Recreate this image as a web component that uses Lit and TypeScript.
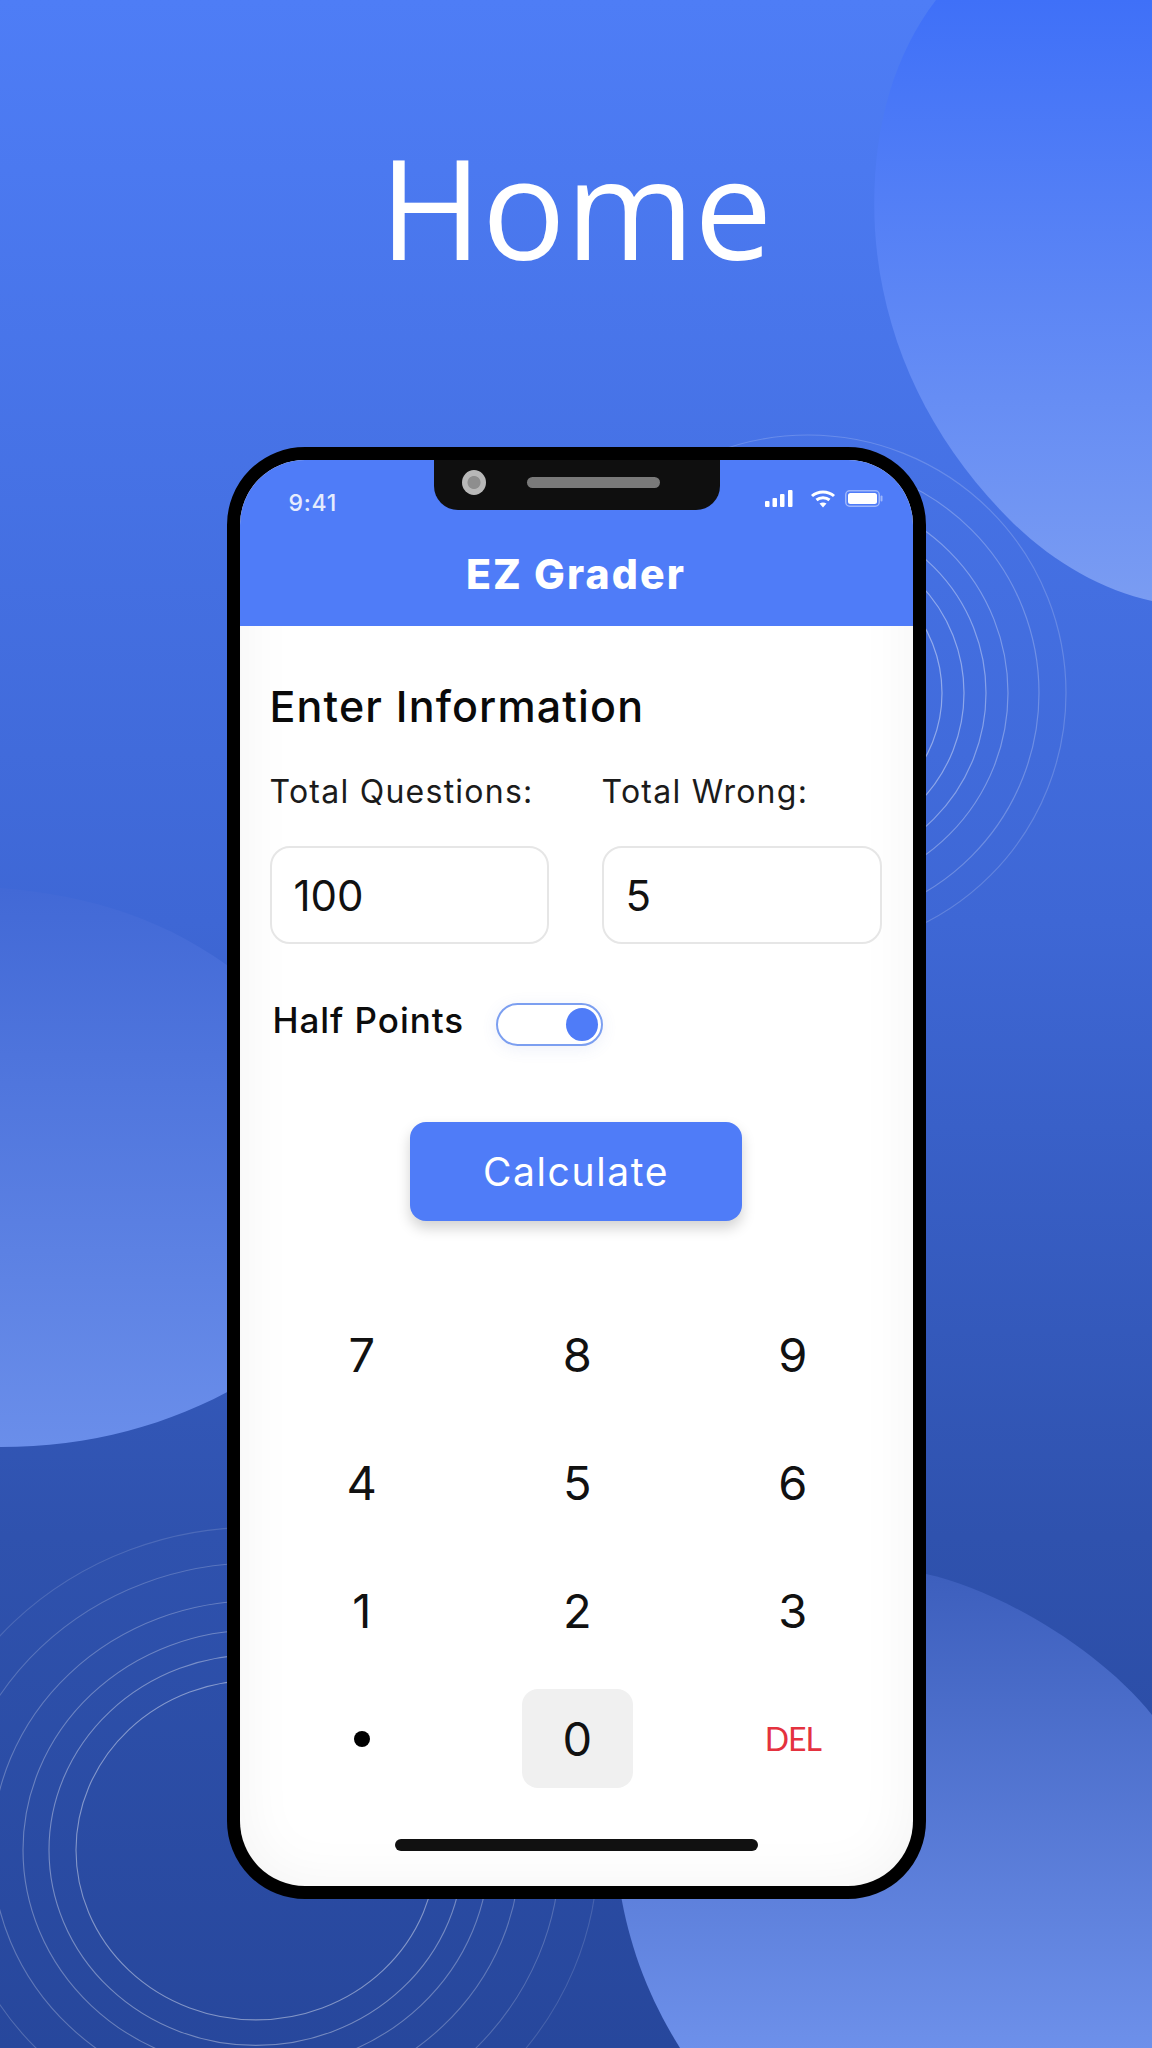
import { LitElement, html, css, svg } from "lit";
import { customElement } from "lit/decorators.js";

const ringsA = [
  [134, 0.42], [156, 0.4], [178, 0.36], [200, 0.3], [231, 0.24], [258, 0.18],
];
const ringsB = [
  [180, 0.42], [207, 0.36], [233, 0.3], [264, 0.26], [304, 0.2], [342, 0.14],
];

@customElement("app-root")
export class AppRoot extends LitElement {
  static styles = css`
    :host {
      display: block;
      position: relative;
      width: 1152px;
      height: 2048px;
      overflow: hidden;
      background: linear-gradient(180deg, #4e7df6 0%, #3e67d5 45%, #2f52ae 75%, #27479c 100%);
      font-family: "Inter", "Liberation Sans", sans-serif;
    }
    .bg { position: absolute; inset: 0; width: 1152px; height: 2048px; }
    .page { position: relative; display: flex; flex-direction: column; align-items: center; }
    .title {
      height: 412px;
      display: flex;
      align-items: center;
      justify-content: center;
      color: #fff;
      font: 400 139px "Open Sans", "Noto Sans", sans-serif;
    }
    .phone {
      box-sizing: border-box;
      width: 699px;
      height: 1452px;
      margin-top: 35px;
      border: 13px solid #000;
      border-radius: 78px;
      background: #000;
      position: relative;
    }
    .screen {
      height: 100%;
      border-radius: 65px;
      overflow: hidden;
      background: #fff;
      display: flex;
      flex-direction: column;
      box-shadow: inset 0 0 60px rgba(0, 0, 0, 0.05);
    }
    .notch {
      position: absolute;
      top: 0;
      left: 194px;
      width: 286px;
      height: 50px;
      background: #0f0f0f;
      border-radius: 0 0 24px 24px;
      display: flex;
      align-items: center;
      padding-left: 28px;
      padding-bottom: 6px;
      box-sizing: border-box;
      gap: 41px;
    }
    .camera {
      width: 24px;
      height: 25px;
      border-radius: 50%;
      background: radial-gradient(circle, #8e8e8e 0 35%, #b8b8b8 40% 100%);
    }
    .speaker { width: 133px; height: 11px; border-radius: 6px; background: #7a7a7a; }
    .header { height: 166px; flex: none; background: #4f7cf8; color: #fff; }
    .status {
      height: 30px;
      padding: 28px 30px 0 49px;
      display: flex;
      align-items: center;
      justify-content: space-between;
    }
    .time { font-size: 23px; font-weight: 500; letter-spacing: 0.8px; color: #e6ecfd; }
    .icons { display: flex; align-items: center; gap: 9px; margin-bottom: 9px; }
    .icons svg { display: block; }
    .icons .signal { margin-right: 8px; }
    .app-name {
      margin-top: 33px;
      height: 46px;
      line-height: 46px;
      text-align: center;
      font-size: 41px;
      font-weight: 800;
      letter-spacing: 2.1px;
    }
    .body { flex: 1; display: flex; flex-direction: column; }
    .content { padding: 55px 30px 0; display: flex; flex-direction: column; }
    h2 {
      margin: 0;
      height: 50px;
      line-height: 50px;
      font-size: 43px;
      font-weight: 500;
      letter-spacing: 1.15px;
      color: #0a0a0a;
    }
    .fields {
      margin-top: 40px;
      display: grid;
      grid-template-columns: 279px 280px;
      column-gap: 53px;
      row-gap: 35px;
    }
    .label {
      height: 40px;
      line-height: 42px;
      font-size: 32px;
      letter-spacing: 1.25px;
      color: #1b1b1b;
      white-space: nowrap;
    }
    .input {
      box-sizing: border-box;
      height: 98px;
      border: 2px solid #e6e6e6;
      border-radius: 20px;
      background: #fff;
      padding: 0 0 0 22px;
      display: flex;
      align-items: center;
      font-size: 42px;
      color: #111;
    }
    .half { margin-top: 59px; height: 43px; display: flex; align-items: center; padding-left: 3px; }
    .half-label {
      width: 223px;
      font-size: 35px;
      font-weight: 500;
      letter-spacing: 0.95px;
      color: #0c0c0c;
      padding-bottom: 9px;
      white-space: nowrap;
    }
    .toggle {
      box-sizing: border-box;
      width: 107px;
      height: 43px;
      border: 2px solid #7c9ff0;
      border-radius: 22px;
      background: #fff;
      display: flex;
      align-items: center;
      justify-content: flex-end;
      padding-right: 3px;
      box-shadow: 0 3px 16px rgba(80, 110, 200, 0.1);
    }
    .thumb { width: 32px; height: 33px; border-radius: 50%; background: #4f7cf8; }
    .calc {
      align-self: center;
      margin-top: 76px;
      width: 332px;
      height: 99px;
      border-radius: 16px;
      background: #4f7cf8;
      color: #fff;
      display: flex;
      align-items: center;
      justify-content: center;
      font-size: 39px;
      letter-spacing: 1.6px;
      box-shadow: 0 7px 14px rgba(0, 0, 0, 0.18);
    }
    .keys {
      margin: 70px -15.5px 0;
      display: grid;
      grid-template-columns: repeat(3, 215.5px);
      grid-auto-rows: 128px;
    }
    .key {
      display: flex;
      align-items: center;
      justify-content: center;
      font: 400 47px "Inter", "Lato", sans-serif;
      color: #111;
      padding-bottom: 1px;
    }
    .zero {
      width: 111px;
      height: 99px;
      border-radius: 16px;
      background: #f0f0f0;
      display: flex;
      align-items: center;
      justify-content: center;
    }
    .dot { width: 16px; height: 16px; border-radius: 50%; background: #000; }
    .del { font: 400 32px "Lato", sans-serif; letter-spacing: -1px; color: #e4323f; }
    .home-bar {
      align-self: center;
      margin-top: 36px;
      width: 363px;
      height: 12px;
      border-radius: 6px;
      background: #111;
    }
  `;

  private background() {
    return html`<svg class="bg" viewBox="0 0 1152 2048" aria-hidden="true">
      <defs>
        <linearGradient id="g1" x1="0" y1="0" x2="0" y2="1">
          <stop offset="0" stop-color="#3f70f8" />
          <stop offset="1" stop-color="#7a9cf2" />
        </linearGradient>
        <linearGradient id="g2" x1="0" y1="0" x2="0" y2="1">
          <stop offset="0" stop-color="#4269d6" />
          <stop offset="1" stop-color="#6a8eea" />
        </linearGradient>
        <linearGradient id="g3" x1="0" y1="0" x2="0" y2="1">
          <stop offset="0" stop-color="#3d5fbd" />
          <stop offset="1" stop-color="#6d90ea" />
        </linearGradient>
      </defs>
      <path fill="url(#g1)" d="M936 0 C890 60 870 140 875 230 C882 340 930 440 1010 520 C1050 560 1100 590 1152 601 L1152 0 Z" />
      <path fill="url(#g2)" d="M0 888 C90 895 170 920 240 975 L240 1385 C170 1425 90 1447 0 1447 Z" />
      <path fill="url(#g3)" d="M620 1890 C680 1760 800 1574 926 1574 C1000 1590 1100 1650 1152 1715 L1152 2048 L680 2048 C650 2000 630 1950 620 1890 Z" />
      ${ringsA.map(([r, o]) => svg`<circle cx="808" cy="693" r=${r} fill="none" stroke="#fff" stroke-opacity=${o} stroke-width="1.2" />`)}
      ${ringsB.map(([r, o]) => svg`<ellipse cx="256" cy="1850" rx=${r} ry=${r * 0.944} fill="none" stroke="#fff" stroke-opacity=${o} stroke-width="1.1" />`)}
    </svg>`;
  }

  private statusIcons() {
    return html`<div class="icons">
      <svg class="signal" width="28" height="17" viewBox="0 0 28 17" fill="#fff">
        <rect x="0" y="11" width="4.5" height="6" rx="1" />
        <rect x="7.5" y="8" width="4.5" height="9" rx="1" />
        <rect x="15" y="4" width="4.5" height="13" rx="1" />
        <rect x="23" y="0" width="4.5" height="17" rx="1" />
      </svg>
      <svg width="26" height="19" viewBox="0 0 26 19" fill="none" stroke="#fff" stroke-width="3">
        <path d="M2 7 C8 1.5 18 1.5 24 7" />
        <path d="M6.5 11 C10 8 16 8 19.5 11" />
        <path d="M13 18.5 L9.5 14.6 C11.5 13 14.5 13 16.5 14.6 Z" fill="#fff" stroke="none" />
      </svg>
      <svg width="38" height="17" viewBox="0 0 38 17">
        <rect x="0.75" y="0.75" width="33.5" height="15.5" rx="4" fill="none" stroke="#fff" stroke-opacity="0.45" stroke-width="1.5" />
        <rect x="3" y="3" width="29" height="11" rx="2.5" fill="#fff" />
        <rect x="35.5" y="5.5" width="2" height="6" rx="1" fill="#fff" fill-opacity="0.45" />
      </svg>
    </div>`;
  }

  render() {
    return html`
      ${this.background()}
      <div class="page">
        <div class="title">Home</div>
        <div class="phone">
          <div class="screen">
            <div class="header">
              <div class="status">
                <span class="time">9:41</span>
                ${this.statusIcons()}
              </div>
              <div class="app-name">EZ Grader</div>
            </div>
            <div class="body">
              <div class="content">
                <h2>Enter Information</h2>
                <div class="fields">
                  <div class="label">Total Questions:</div>
                  <div class="label">Total Wrong:</div>
                  <div class="input">100</div>
                  <div class="input">5</div>
                </div>
                <div class="half">
                  <span class="half-label">Half Points</span>
                  <div class="toggle"><div class="thumb"></div></div>
                </div>
                <div class="calc">Calculate</div>
                <div class="keys">
                  ${["7", "8", "9", "4", "5", "6", "1", "2", "3"].map(
                    (k) => html`<div class="key">${k}</div>`
                  )}
                  <div class="key"><div class="dot"></div></div>
                  <div class="key"><div class="zero">0</div></div>
                  <div class="key del">DEL</div>
                </div>
              </div>
              <div class="home-bar"></div>
            </div>
          </div>
          <div class="notch">
            <div class="camera"></div>
            <div class="speaker"></div>
          </div>
        </div>
      </div>
    `;
  }
}
